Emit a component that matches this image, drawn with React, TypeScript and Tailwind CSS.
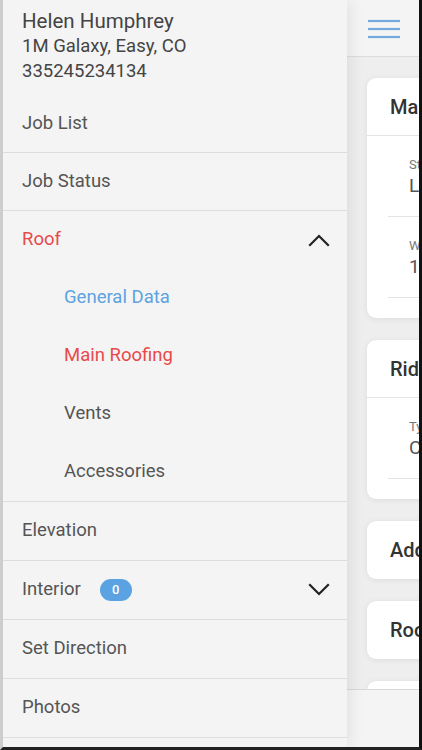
import React from "react";

const font = { fontFamily: "Roboto, 'Noto Sans', sans-serif" };

const Chevron = ({ up }: { up?: boolean }) => (
  <svg width="22" height="14" viewBox="0 0 22 14" fill="none">
    <polyline
      points={up ? "2,12 11,3 20,12" : "2,2 11,11 20,2"}
      stroke="#222"
      strokeWidth="2.2"
      strokeLinecap="square"
      strokeLinejoin="miter"
    />
  </svg>
);

const Row = ({
  label,
  color = "text-[#555]",
  right,
  badge,
  h = "h-[58px]",
}: {
  label: string;
  color?: string;
  right?: React.ReactNode;
  badge?: string;
  h?: string;
}) => (
  <div className={`flex items-center justify-between pl-[19px] pr-[17px] border-b border-[#dddddd] ${h}`}>
    <div className="flex items-center">
      <span className={`text-[18.5px] ${color}`}>{label}</span>
      {badge && (
        <span className="ml-[19px] w-[32px] h-[22px] rounded-full bg-[#5ba2e2] text-white text-[13px] font-medium flex items-center justify-center">
          {badge}
        </span>
      )}
    </div>
    {right}
  </div>
);

const SubRow = ({ label, color = "text-[#555]" }: { label: string; color?: string }) => (
  <div className="flex items-center h-[58px] pl-[61px]">
    <span className={`text-[18.5px] ${color}`}>{label}</span>
  </div>
);

const Card = ({ title, fields }: { title: string; fields?: { k: string; v: string }[] }) => (
  <div className="bg-white rounded-[9px] shadow-[0_1px_6px_rgba(0,0,0,0.08)] w-[80px] shrink-0 overflow-hidden">
    <div className={`h-[58px] flex items-center pl-[23px] ${fields ? "border-b border-[#e4e4e4]" : ""}`}>
      <span className="text-[20px] font-medium text-[#333] whitespace-nowrap">{title}</span>
    </div>
    {fields && (
      <div className="pl-[21px] pb-[20px]">
        {fields.map((f) => (
          <div key={f.k} className="h-[81px] border-b border-[#e4e4e4] pl-[21px] flex flex-col justify-center pt-[2px]">
            <span className="text-[13px] text-[#777] leading-[18px] whitespace-nowrap">{f.k}</span>
            <span className="text-[19px] text-[#555] leading-[24px] whitespace-nowrap">{f.v}</span>
          </div>
        ))}
      </div>
    )}
  </div>
);

export default function App() {
  return (
    <div
      style={font}
      className="w-[422px] h-[750px] overflow-hidden flex bg-[#f3f3f3] border-l-[3px] border-l-[#cdcdcd] border-r-[3px] border-r-[#111] border-b-[3px] border-b-[#222]"
    >
      <div className="w-[344px] shrink-0 bg-[#f4f4f4] relative z-10 shadow-[4px_0_14px_rgba(0,0,0,0.07)] flex flex-col">
        <div className="pt-[9px] pl-[19px] h-[95px]">
          <div className="text-[20.5px] leading-[25px] text-[#444]">Helen Humphrey</div>
          <div className="text-[18.5px] leading-[25px] text-[#444]">1M Galaxy, Easy, CO</div>
          <div className="text-[18.5px] leading-[25px] text-[#444]">335245234134</div>
        </div>
        <Row label="Job List" h="h-[58px]" />
        <Row label="Job Status" h="h-[58px]" />
        <div className="border-b border-[#dddddd]">
          <div className="flex items-center justify-between pl-[19px] pr-[17px] h-[58px]">
            <span className="text-[18.5px] text-[#e84a4a]">Roof</span>
            <Chevron up />
          </div>
          <SubRow label="General Data" color="text-[#5ca3e0]" />
          <SubRow label="Main Roofing" color="text-[#e84a4a]" />
          <SubRow label="Vents" />
          <SubRow label="Accessories" />
        </div>
        <Row label="Elevation" h="h-[59px]" />
        <Row label="Interior" badge="0" right={<Chevron />} h="h-[59px]" />
        <Row label="Set Direction" h="h-[59px]" />
        <Row label="Photos" h="h-[59px]" />
      </div>

      <div className="flex-1 flex flex-col min-w-0">
        <div className="h-[57px] shrink-0 border-b border-[#dcdcdc] bg-[#f4f4f4] flex items-start pt-[19px] pl-[21px]">
          <svg width="32" height="20" viewBox="0 0 32 20">
            <line x1="0" y1="2" x2="32" y2="2" stroke="#72aae0" strokeWidth="2.2" />
            <line x1="0" y1="10" x2="32" y2="10" stroke="#72aae0" strokeWidth="2.2" />
            <line x1="0" y1="18" x2="32" y2="18" stroke="#72aae0" strokeWidth="2.2" />
          </svg>
        </div>
        <div className="flex-1 min-h-0 overflow-hidden bg-[#eeeeee] pl-[20px] pt-[21px] flex flex-col gap-[22px]">
          <Card
            title="Main Roofing"
            fields={[
              { k: "Style", v: "Laminated" },
              { k: "Waste", v: "10" },
            ]}
          />
          <Card title="Ridge" fields={[{ k: "Type", v: "Cap" }]} />
          <Card title="Addons" />
          <Card title="Roof Items" />
          <Card title="Other" />
        </div>
        <div className="h-[58px] shrink-0 border-t border-[#d8d8d8] bg-[#f4f4f4]" />
      </div>
    </div>
  );
}
